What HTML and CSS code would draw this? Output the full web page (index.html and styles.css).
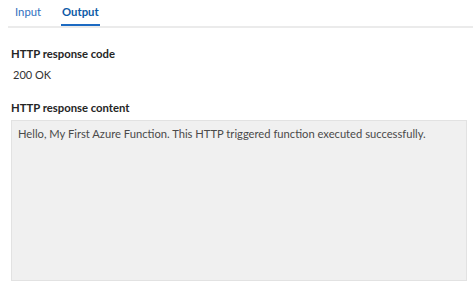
FILE: index.html
```html
<!DOCTYPE html>
<html>
<head>
<meta charset="utf-8">
<link rel="stylesheet" href="styles.css">
</head>
<body>
<div class="page">
  <div class="tabs">
    <div class="tab">Input</div>
    <div class="tab active">Output</div>
  </div>
  <div class="field">
    <div class="label">HTTP response code</div>
    <div class="value">200 OK</div>
  </div>
  <div class="field">
    <div class="label">HTTP response content</div>
    <div class="box">Hello, My First Azure Function. This HTTP triggered function executed successfully.</div>
  </div>
</div>
</body>
</html>
```
FILE: styles.css
```css
html, body { margin: 0; padding: 0; background: #fff; }
body {
  font-family: "Lato", "Noto Sans", sans-serif;
  color: #323130;
  width: 474px;
  height: 287px;
  overflow: hidden;
}
.page { padding: 0 0 0 8px; }
.tabs {
  display: flex;
  gap: 21px;
  padding-left: 7px;
  border-bottom: 2px solid #ebebeb;
  height: 26px;
  margin-right: 1px;
}
.tab {
  font-size: 11.3px;
  color: #2f6fc0;
  line-height: 23px;
  position: relative;
}
.tab.active {
  color: #0c5aa6;
  font-weight: 700;
}
.tab.active::after {
  content: "";
  position: absolute;
  left: -1px;
  right: -1px;
  bottom: 0px;
  height: 2px;
  background: #1c6ac2;
}
.field { padding-left: 3px; }
.label {
  font-size: 11.3px;
  font-weight: 700;
  color: #252525;
  margin-top: 18px;
  line-height: 16px;
}
.value {
  font-size: 11px;
  color: #333;
  margin-top: 5px;
  padding-left: 2px;
  line-height: 16px;
}
.field + .field .label { margin-top: 17px; }
.box {
  margin-top: 4px;
  width: 456px;
  height: 161px;
  background: #f0f0f0;
  border: 1px solid #e2e2e2;
  font-size: 11.2px;
  color: #4a4a4a;
  padding: 5px 0 0 6px;
  box-sizing: border-box;
  line-height: 16px;
}
```
